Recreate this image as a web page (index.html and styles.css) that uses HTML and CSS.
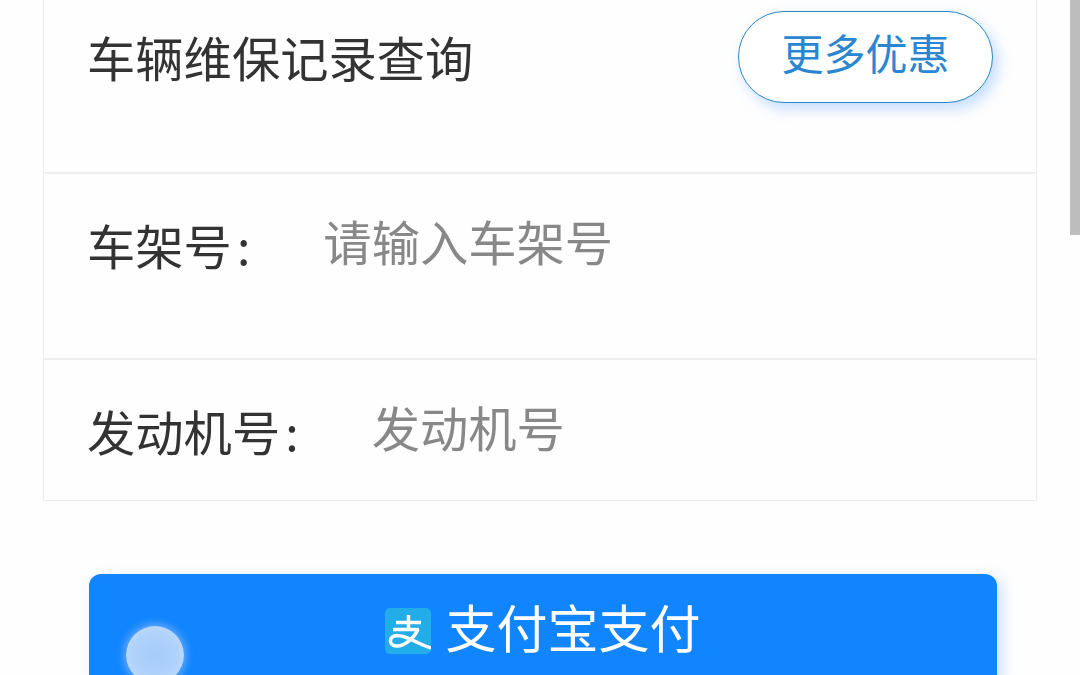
FILE: index.html
```html
<!DOCTYPE html>
<html lang="zh">
    <head>
        <meta charset="utf-8">
        <link rel="stylesheet" href="styles.css">
    </head>
 <body>
    <div class="card">
        <div class="row row-title">
            <span class="title">车辆维保记录查询</span>
            <button class="more-btn">更多优惠</button>
        </div>
        <div class="row row-vin">
            <span class="lbl">车架号<span class="colon">:</span></span>
            <input class="txt" type="text" placeholder="请输入车架号" />
        </div>
        <div class="row row-engine">
            <span class="lbl">发动机号<span class="colon">:</span></span>
            <input class="txt" type="text" placeholder="发动机号" />
        </div>
    </div>
    <button class="pay-btn">
        <svg class="pay-logo" viewBox="0 0 46 46" width="46" height="46">
            <rect width="46" height="46" rx="5" fill="#22ade8"/>
            <path d="M11 14.500H36M23.500 7V21.500M8 21.500H34" fill="none" stroke="#fff" stroke-width="3.500"/>
            <path d="M33 21C29 31 18 39 11 38C3 37 4 28 12 27.500C23 27.500 32 36 46 40" fill="none" stroke="#fff" stroke-width="3.500"/>
        </svg>
        <span class="pay-text">支付宝支付</span>
    </button>
    <div class="touch-dot"></div>
    <div class="scroll-thumb"></div>
 </body>
</html>
```

FILE: styles.css
```css
html, body{
    margin: 0;
    height: 675px;
    overflow: hidden;
    background: #fefefe;
    font-family: "Noto Sans CJK SC", "Liberation Sans", sans-serif;
}
.card{
    margin: 0 43px;
    border: 1px solid #ededed;
    border-top: none;
    background: #fefefe;
}
.row{
    display: flex;
    padding: 0 43px;
    box-sizing: border-box;
    border-bottom: 2px solid #efefef;
    color: #333;
    font-size: 48.300px;
}
.row:last-child{
    border-bottom: none;
}
.row-title{
    height: 174px;
    justify-content: space-between;
    align-items: flex-start;
}
.row-vin{
    height: 186px;
    align-items: flex-start;
    padding-top: 35px;
}
.row-engine{
    height: 140px;
    align-items: flex-start;
    padding-top: 35px;
}
.title{
    margin-top: 21px;
    line-height: 70px;
}
.lbl{
    line-height: 70px;
    margin-right: 73px;
}
.colon{
    margin-left: 5px;
}
.txt{
    flex: 1;
    height: 70px;
    margin-top: -4px;
    padding: 0;
    border: none;
    outline: none;
    background: transparent;
    font: inherit;
    color: #333;
}
.txt::placeholder{
    color: #888;
}
.more-btn{
    width: 255px;
    height: 92px;
    margin-top: 11px;
    padding: 0 0 12px;
    border: 1px solid #2a86c8;
    border-radius: 46px;
    background: #fff;
    box-shadow: 5px 6px 14px rgba(90, 160, 255, 0.35);
    color: #2a86d0;
    font: inherit;
    font-size: 42px;
}
.pay-btn{
    display: flex;
    justify-content: center;
    align-items: center;
    gap: 14px;
    width: 908px;
    height: 112px;
    margin: 73px 0 0 89px;
    padding: 0;
    border: none;
    border-radius: 12px;
    background: #1085fd;
    box-shadow: 6px 4px 14px rgba(90, 140, 255, 0.25);
    color: #fff;
    font: inherit;
    font-size: 51px;
}
.pay-logo{
    margin-top: 2px;
}
.pay-text{
    margin-bottom: 8px;
}
.touch-dot{
    position: absolute;
    left: 126px;
    top: 626px;
    width: 58px;
    height: 58px;
    border-radius: 50%;
    background: radial-gradient(circle, #a6ccfb 0%, #b0d2fb 55%, #cbdff7 92%);
    box-shadow: 0 0 7px 3px rgba(120, 175, 250, 0.75);
}
.scroll-thumb{
    position: absolute;
    right: 0;
    top: 0;
    width: 10px;
    height: 235px;
    background: #bdbdbd;
}
```
